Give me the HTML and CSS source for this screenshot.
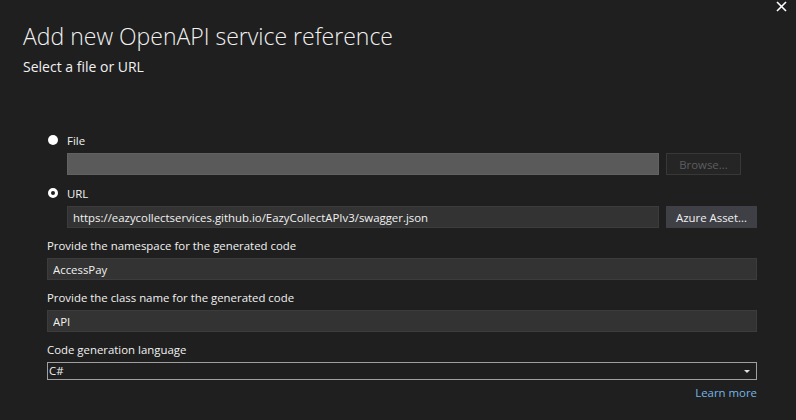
FILE: index.html
```html
<!DOCTYPE html>
<html lang="en">
<head>
    <meta charset="UTF-8">
    <title>Add new OpenAPI service reference</title>
    <link rel="stylesheet" href="styles.css">
</head>
<body>
    <div class="dialog">
        <!-- Close button -->
        <div class="dialog-close">
            <svg width="11" height="11" viewBox="0 0 11 11" fill="none" stroke="#ffffff" stroke-width="1.6">
                <line x1="1" y1="1" x2="10" y2="10"></line>
                <line x1="10" y1="1" x2="1" y2="10"></line>
            </svg>
        </div>

        <div class="dialog-header">
            <h1 class="dialog-title">Add new OpenAPI service reference</h1>
            <div class="dialog-subtitle">Select a file or URL</div>
        </div>

        <div class="form">
            <div class="option">
                <span class="radio radio-file"></span>
                <span>File</span>
            </div>
            <div class="indent-row">
                <input type="text" class="text-box file-box" disabled>
                <button class="btn btn-browse" disabled>Browse...</button>
            </div>

            <div class="option">
                <span class="radio radio-url"></span>
                <span>URL</span>
            </div>
            <div class="indent-row">
                <input type="text" class="text-box url-box" value="https://eazycollectservices.github.io/EazyCollectAPIv3/swagger.json">
                <button class="btn btn-azure">Azure Asset...</button>
            </div>

            <div class="field-label">Provide the namespace for the generated code</div>
            <input type="text" class="text-box full-box" value="AccessPay">

            <div class="field-label">Provide the class name for the generated code</div>
            <input type="text" class="text-box full-box" value="API">

            <div class="field-label">Code generation language</div>
            <div class="select-box">
                <span>C#</span>
                <span class="select-arrow"></span>
            </div>

            <div class="learn-more">Learn more</div>
        </div>
    </div>
</body>
</html>
```

FILE: styles.css
```css
body {
    margin: 0;
    padding: 0;
    background-color: #1f1f1f;
    font-family: 'Open Sans', 'Noto Sans', sans-serif;
    font-size: 11.4px;
    color: #f1f1f1;
}

.dialog {
    position: relative;
    width: 796px;
    height: 420px;
    box-sizing: border-box;
    padding: 0 39px 0 47px;
}

.dialog-close {
    position: absolute;
    top: 0;
    right: 9px;
    width: 11px;
    height: 11px;
}

/* Header */
.dialog-header {
    margin-left: -24px;
    padding-top: 19px;
}

.dialog-title {
    margin: 0;
    font-size: 23px;
    font-weight: 300;
    line-height: 34px;
    color: #f1f1f1;
}

.dialog-subtitle {
    font-size: 14px;
    line-height: 20px;
    margin-top: 4px;
}

/* Form */
.form {
    padding-top: 53px;
    display: flex;
    flex-direction: column;
}

.option {
    display: flex;
    align-items: center;
    gap: 9px;
    height: 20px;
    margin-bottom: 3px;
}

.radio {
    width: 10px;
    height: 10px;
    border-radius: 50%;
    box-sizing: border-box;
    margin-left: 1px;
}

.radio-file {
    background-color: #ffffff;
}

.radio-url {
    background-color: #1f1f1f;
    border: 3px solid #ffffff;
}

.indent-row {
    display: flex;
    gap: 7px;
    padding-left: 20px;
    margin-bottom: 8px;
}

.text-box {
    box-sizing: border-box;
    height: 22px;
    margin: 0;
    padding: 0 5px;
    font-family: inherit;
    font-size: 11.4px;
    color: #f1f1f1;
    background-color: #333333;
    border: 1px solid #3c3c3c;
    outline: none;
}

.file-box,
.url-box {
    flex: 0 0 592px;
}

.file-box {
    background-color: #5a5a5a;
    border-color: #626262;
}

.full-box {
    width: 100%;
    margin-bottom: 8px;
}

.btn {
    box-sizing: border-box;
    height: 22px;
    padding: 0;
    font-family: inherit;
    font-size: 11.4px;
    border: 1px solid #3f3f3f;
}

.btn-browse {
    width: 75px;
    background-color: #252526;
    border-color: #383838;
    color: #5e5e5e;
}

.btn-azure {
    width: 92px;
    background-color: #3f3f46;
    border-color: #3f3f46;
    color: #f1f1f1;
}

.field-label {
    height: 20px;
    line-height: 20px;
    margin-bottom: 2px;
}

.select-box {
    box-sizing: border-box;
    height: 18px;
    display: flex;
    align-items: center;
    justify-content: space-between;
    padding: 0 6px 0 1px;
    border: 1px solid #a0a0a0;
    line-height: 16px;
}

.select-arrow {
    width: 0;
    height: 0;
    border-left: 3px solid transparent;
    border-right: 3px solid transparent;
    border-top: 3px solid #e0e0e0;
}

.learn-more {
    align-self: flex-end;
    margin-top: 4px;
    font-size: 11.4px;
    line-height: 18px;
    color: #75b6e7;
}
```
